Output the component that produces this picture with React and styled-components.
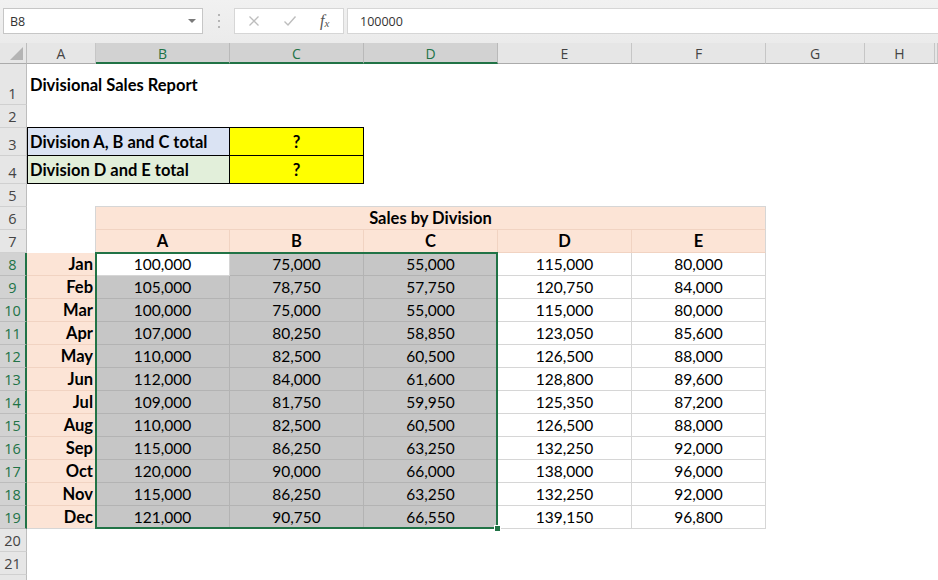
import React from "react";
import styled, { createGlobalStyle, css } from "styled-components";

const GREEN = "#217346";
const PEACH = "#fce4d6";
const PEACH_LINE = "#f1d3c2";
const TABLE_LINE = "#d6d6d6";
const SEL_FILL = "#c6c6c6";
const SEL_LINE = "#b3b3b3";

const COLUMNS = ["A", "B", "C", "D", "E", "F", "G", "H"];
const SELECTED_COLS = ["B", "C", "D"];
const ROW_COUNT = 21;

const DATA = [
  ["Jan", "100,000", "75,000", "55,000", "115,000", "80,000"],
  ["Feb", "105,000", "78,750", "57,750", "120,750", "84,000"],
  ["Mar", "100,000", "75,000", "55,000", "115,000", "80,000"],
  ["Apr", "107,000", "80,250", "58,850", "123,050", "85,600"],
  ["May", "110,000", "82,500", "60,500", "126,500", "88,000"],
  ["Jun", "112,000", "84,000", "61,600", "128,800", "89,600"],
  ["Jul", "109,000", "81,750", "59,950", "125,350", "87,200"],
  ["Aug", "110,000", "82,500", "60,500", "126,500", "88,000"],
  ["Sep", "115,000", "86,250", "63,250", "132,250", "92,000"],
  ["Oct", "120,000", "90,000", "66,000", "138,000", "96,000"],
  ["Nov", "115,000", "86,250", "63,250", "132,250", "92,000"],
  ["Dec", "121,000", "90,750", "66,550", "139,150", "96,800"],
];

const GlobalStyle = createGlobalStyle`
  html, body { margin: 0; padding: 0; background: #ffffff; }
  body { font-family: Lato, "Liberation Sans", sans-serif; color: #000; }
`;

const Window = styled.div`
  width: 938px;
  height: 580px;
  overflow: hidden;
  display: flex;
  flex-direction: column;
  background: #ffffff;
`;

/* ---------- formula bar ---------- */
const FormulaBar = styled.div`
  height: 43px;
  flex: none;
  display: flex;
  align-items: flex-start;
  padding: 8px 0 0 3px;
  box-sizing: border-box;
  background: linear-gradient(#f1f1f1, #ebebeb);
  font-family: "Open Sans", "Noto Sans", sans-serif;
  font-size: 12.5px;
  color: #333;
`;

const NameBox = styled.div`
  width: 200px;
  height: 26px;
  box-sizing: border-box;
  border: 1px solid #c6c6c6;
  background: #fff;
  display: flex;
  align-items: center;
  justify-content: space-between;
  padding: 0 6px 0 6px;
`;

const Caret = styled.span`
  width: 0;
  height: 0;
  border-left: 4px solid transparent;
  border-right: 4px solid transparent;
  border-top: 4px solid #7a7a7a;
`;

const Grip = styled.div`
  width: 31px;
  height: 26px;
  display: flex;
  align-items: center;
  justify-content: center;
`;

const FxGroup = styled.div`
  width: 110px;
  height: 26px;
  box-sizing: border-box;
  border: 1px solid #d6d6d6;
  background: #fff;
  display: flex;
  align-items: center;
  padding-left: 13px;
  gap: 23px;
`;

const FxLabel = styled.span`
  font-family: "Liberation Serif", "DejaVu Serif", serif;
  font-style: italic;
  font-size: 16px;
  color: #555;
  line-height: 1;
  sub {
    font-size: 11px;
    vertical-align: baseline;
    position: relative;
    top: 1px;
  }
`;

const FormulaInput = styled.div`
  flex: 1;
  height: 26px;
  margin-left: 3px;
  box-sizing: border-box;
  border: 1px solid #d6d6d6;
  border-right: none;
  background: #fff;
  display: flex;
  align-items: center;
  padding-left: 12px;
`;

/* ---------- sheet grid ---------- */
const Sheet = styled.div`
  flex: 1;
  display: grid;
  grid-template-columns: 27px 69px 134px 134px 134px 134px 134px 99px 70px 1fr;
  grid-template-rows: 21px 41px 23px 28px 28px repeat(18, 23px);
  overflow: hidden;
`;

const place = css`
  grid-column: ${(p) => p.$col} / span ${(p) => p.$span || 1};
  grid-row: ${(p) => p.$row} / span ${(p) => p.$rspan || 1};
  box-sizing: border-box;
  min-width: 0;
`;

const headerFont = css`
  font-family: "Open Sans", "Noto Sans", sans-serif;
  font-size: 14px;
`;

const Corner = styled.div`
  ${place};
  background: #e6e6e6;
  border-right: 1px solid #bdbdbd;
  border-bottom: 1px solid #ababab;
  display: flex;
  align-items: flex-end;
  justify-content: flex-end;
  padding: 0 3px 3px 0;
`;

const ColHeader = styled.div`
  ${place};
  ${headerFont};
  background: ${(p) => (p.$selected ? "#d2d2d2" : "#e6e6e6")};
  color: ${(p) => (p.$selected ? GREEN : "#444")};
  border-right: 1px solid ${(p) => (p.$selected ? "#b9b9b9" : "#c6c6c6")};
  border-bottom: ${(p) => (p.$selected ? `2px solid ${GREEN}` : "1px solid #ababab")};
  display: flex;
  align-items: center;
  justify-content: center;
  padding-top: ${(p) => (p.$selected ? "1px" : "0")};
`;

const RowHeader = styled.div`
  ${place};
  ${headerFont};
  font-size: 14.5px;
  background: ${(p) => (p.$selected ? "#d2d2d2" : "#e6e6e6")};
  color: ${(p) => (p.$selected ? GREEN : "#444")};
  border-right: ${(p) => (p.$selected ? `2px solid ${GREEN}` : "1px solid #bdbdbd")};
  border-bottom: 1px solid ${(p) => (p.$selected ? "#bcbcbc" : "#d0d0d0")};
  display: flex;
  align-items: flex-end;
  justify-content: center;
  line-height: 20px;
  padding-right: ${(p) => (p.$selected ? "0" : "1px")};
`;

const cellText = css`
  font-size: 15.5px;
  display: flex;
  align-items: center;
  white-space: nowrap;
`;

const boldText = css`
  font-size: 16.5px;
  font-weight: 700;
`;

const Title = styled.div`
  ${place};
  ${cellText};
  ${boldText};
  padding-left: 3px;
  overflow: visible;
`;

const InfoLabel = styled.div`
  ${place};
  ${cellText};
  ${boldText};
  padding-left: 2px;
  background: ${(p) => p.$tint};
  border-left: 1px solid #000;
  border-right: 1px solid #000;
  border-bottom: 1px solid #000;
  border-top: ${(p) => (p.$top ? "1px solid #000" : "none")};
  margin-top: ${(p) => (p.$top ? "-1px" : "0")};
`;

const InfoValue = styled.div`
  ${place};
  ${cellText};
  ${boldText};
  justify-content: center;
  background: #ffff00;
  border-right: 1px solid #000;
  border-bottom: 1px solid #000;
  border-top: ${(p) => (p.$top ? "1px solid #000" : "none")};
  margin-top: ${(p) => (p.$top ? "-1px" : "0")};
`;

const Band = styled.div`
  ${place};
  ${cellText};
  ${boldText};
  justify-content: center;
  background: ${PEACH};
  border-top: 1px solid ${TABLE_LINE};
  border-left: 1px solid ${TABLE_LINE};
  border-right: 1px solid ${TABLE_LINE};
  border-bottom: 1px solid ${PEACH_LINE};
  margin: -1px 0 0 -1px;
`;

const BandHead = styled.div`
  ${place};
  ${cellText};
  ${boldText};
  justify-content: center;
  background: ${PEACH};
  border-right: 1px solid ${(p) => (p.$last ? TABLE_LINE : PEACH_LINE)};
  border-bottom: 1px solid ${PEACH_LINE};
  border-left: ${(p) => (p.$first ? `1px solid ${TABLE_LINE}` : "none")};
  margin-left: ${(p) => (p.$first ? "-1px" : "0")};
`;

const Month = styled.div`
  ${place};
  ${cellText};
  ${boldText};
  justify-content: flex-end;
  padding-right: 3px;
  background: ${PEACH};
  border-bottom: 1px solid ${(p) => (p.$last ? TABLE_LINE : PEACH_LINE)};
`;

const Value = styled.div`
  ${place};
  ${cellText};
  justify-content: center;
  background: ${(p) => (p.$shaded ? SEL_FILL : "#fff")};
  border-right: 1px solid ${(p) => (p.$shaded ? SEL_LINE : TABLE_LINE)};
  border-bottom: 1px solid ${(p) => (p.$shaded ? SEL_LINE : TABLE_LINE)};
`;

const Selection = styled.div`
  ${place};
  position: relative;
  z-index: 2;
  pointer-events: none;
  border: 2px solid ${GREEN};
  margin: -1px 0 0 -1px;

  &::after {
    content: "";
    position: absolute;
    right: -5px;
    bottom: -5px;
    width: 5px;
    height: 5px;
    background: ${GREEN};
    border: 1px solid #fff;
  }
`;

function GripDots() {
  return (
    <svg width="4" height="16" viewBox="0 0 4 16">
      <rect x="1" y="1" width="2" height="2" fill="#b5b5b5" />
      <rect x="1" y="7" width="2" height="2" fill="#b5b5b5" />
      <rect x="1" y="13" width="2" height="2" fill="#b5b5b5" />
    </svg>
  );
}

function CancelIcon() {
  return (
    <svg width="12" height="12" viewBox="0 0 12 12">
      <path d="M1.5 1.5 L10.5 10.5 M10.5 1.5 L1.5 10.5" stroke="#bdbdbd" strokeWidth="1.3" fill="none" />
    </svg>
  );
}

function EnterIcon() {
  return (
    <svg width="14" height="12" viewBox="0 0 14 12">
      <path d="M1.5 6.5 L5 10 L12.5 1.5" stroke="#bdbdbd" strokeWidth="1.4" fill="none" />
    </svg>
  );
}

function CornerTriangle() {
  return (
    <svg width="13" height="13" viewBox="0 0 13 13">
      <polygon points="13,0 13,13 0,13" fill="#b4b4b4" />
    </svg>
  );
}

export default function App() {
  const rows = Array.from({ length: ROW_COUNT }, (_, i) => i + 1);
  return (
    <>
      <GlobalStyle />
      <Window>
        <FormulaBar>
          <NameBox>
            <span>B8</span>
            <Caret />
          </NameBox>
          <Grip>
            <GripDots />
          </Grip>
          <FxGroup>
            <CancelIcon />
            <EnterIcon />
            <FxLabel>
              f<sub>x</sub>
            </FxLabel>
          </FxGroup>
          <FormulaInput>100000</FormulaInput>
        </FormulaBar>

        <Sheet>
          <Corner $col={1} $row={1}>
            <CornerTriangle />
          </Corner>
          {COLUMNS.map((c, i) => (
            <ColHeader key={c} $col={i + 2} $row={1} $selected={SELECTED_COLS.includes(c)}>
              {c}
            </ColHeader>
          ))}
          <ColHeader $col={10} $row={1} />

          {rows.map((r) => (
            <RowHeader key={r} $col={1} $row={r + 1} $selected={r >= 8 && r <= 19}>
              {r}
            </RowHeader>
          ))}
          <RowHeader $col={1} $row={ROW_COUNT + 2} />

          <Title $col={2} $row={2}>Divisional Sales Report</Title>

          <InfoLabel $col={2} $span={2} $row={4} $tint="#dae3f3" $top>
            Division A, B and C total
          </InfoLabel>
          <InfoValue $col={4} $row={4} $top>?</InfoValue>
          <InfoLabel $col={2} $span={2} $row={5} $tint="#e2efda">
            Division D and E total
          </InfoLabel>
          <InfoValue $col={4} $row={5}>?</InfoValue>

          <Band $col={3} $span={5} $row={7}>Sales by Division</Band>
          {["A", "B", "C", "D", "E"].map((d, i) => (
            <BandHead key={d} $col={i + 3} $row={8} $first={i === 0} $last={i === 4}>
              {d}
            </BandHead>
          ))}

          {DATA.map((row, ri) => {
            const gridRow = ri + 9;
            return (
              <React.Fragment key={row[0]}>
                <Month $col={2} $row={gridRow} $last={ri === DATA.length - 1}>
                  {row[0]}
                </Month>
                {row.slice(1).map((v, ci) => (
                  <Value
                    key={ci}
                    $col={ci + 3}
                    $row={gridRow}
                    $shaded={ci < 3 && !(ci === 0 && ri === 0)}
                  >
                    {v}
                  </Value>
                ))}
              </React.Fragment>
            );
          })}

          <Selection $col={3} $span={3} $row={9} $rspan={12} />
        </Sheet>
      </Window>
    </>
  );
}
